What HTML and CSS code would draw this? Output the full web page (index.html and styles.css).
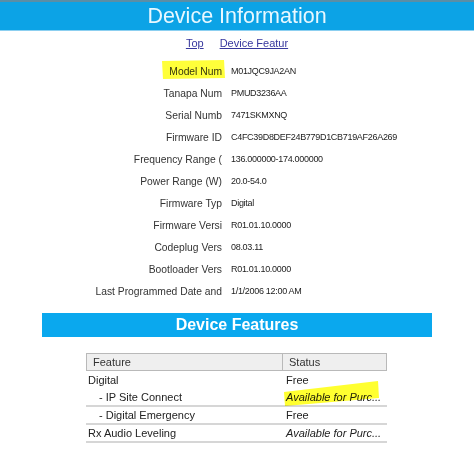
FILE: index.html
```html
<!DOCTYPE html>
<html>
<head>
<meta charset="utf-8">
<link rel="stylesheet" href="styles.css">
</head>
<body>
<div class="topline"></div>
<header class="banner">Device Information</header>
<nav class="nav"><a href="#">Top</a><a href="#">Device Featur</a></nav>

<div class="info">
  <svg class="marker marker-model" width="474" height="30" viewBox="0 0 474 30"><polygon points="162,1 224,0 225,18 163,19" fill="#ffff3a"/></svg>
  <div class="label">Model Num</div><div class="value">M01JQC9JA2AN</div>
  <div class="label">Tanapa Num</div><div class="value">PMUD3236AA</div>
  <div class="label">Serial Numb</div><div class="value">7471SKMXNQ</div>
  <div class="label">Firmware ID</div><div class="value">C4FC39D8DEF24B779D1CB719AF26A269</div>
  <div class="label">Frequency Range (</div><div class="value">136.000000-174.000000</div>
  <div class="label">Power Range (W)</div><div class="value">20.0-54.0</div>
  <div class="label">Firmware Typ</div><div class="value">Digital</div>
  <div class="label">Firmware Versi</div><div class="value">R01.01.10.0000</div>
  <div class="label">Codeplug Vers</div><div class="value">08.03.11</div>
  <div class="label">Bootloader Vers</div><div class="value">R01.01.10.0000</div>
  <div class="label">Last Programmed Date and</div><div class="value">1/1/2006 12:00 AM</div>
</div>

<div class="section-bar">Device Features</div>

<div class="features">
  <div class="frow head"><div class="fcell feat">Feature</div><div class="fcell stat">Status</div></div>
  <div class="frow group"><div class="fcell feat">Digital</div><div class="fcell stat">Free</div></div>
  <div class="frow"><div class="fcell feat sub">- IP Site Connect</div><div class="fcell stat it">Available for Purc...</div></div>
  <div class="frow"><div class="fcell feat sub">- Digital Emergency</div><div class="fcell stat">Free</div></div>
  <div class="frow"><div class="fcell feat">Rx Audio Leveling</div><div class="fcell stat it">Available for Purc...</div></div>
  <svg class="marker marker-status" width="301" height="120" viewBox="0 0 301 120"><polygon points="198,39 292,28 293,45 199,53" fill="#ffff30"/></svg>
</div>
</body>
</html>
```

FILE: styles.css
```css
html, body {
  margin: 0;
  padding: 0;
  background: #ffffff;
  font-family: "Liberation Sans", Arial, sans-serif;
  color: #333;
}

.topline {
  height: 2px;
  background: #5b8ea6;
}

.banner {
  height: 28px;
  line-height: 29px;
  background: #0ca3e6;
  border-bottom: 1px solid #8ccff0;
  color: #e8f8ff;
  text-align: center;
  font-size: 21.5px;
}

.nav {
  height: 24px;
  display: flex;
  justify-content: center;
  align-items: center;
  gap: 16px;
  font-size: 11px;
}
.nav a {
  color: #37379e;
  text-decoration: underline;
}

.info {
  position: relative;
  margin-top: 5px;
  display: grid;
  grid-template-columns: 222px 1fr;
  column-gap: 9px;
  grid-auto-rows: 22px;
  align-items: center;
}
.label {
  text-align: right;
  font-size: 10.3px;
  color: #333;
  white-space: nowrap;
}
.value {
  font-size: 9px;
  letter-spacing: -0.3px;
  color: #222;
  white-space: nowrap;
}

.marker {
  position: absolute;
  left: 0;
  top: 0;
  mix-blend-mode: multiply;
  pointer-events: none;
}

.section-bar {
  margin: 11px 42px 0;
  height: 24px;
  line-height: 24px;
  background: #0aa8ee;
  color: #ffffff;
  text-align: center;
  font-weight: bold;
  font-size: 16px;
}

.features {
  position: relative;
  margin: 16px 0 0 86px;
  width: 301px;
  font-size: 11px;
  color: #222;
}
.frow {
  display: flex;
  height: 18px;
  align-items: center;
  border-bottom: 2px solid #d6d6d6;
  box-sizing: border-box;
}
.frow.head {
  background: #efefef;
  border: 1px solid #b9b9b9;
  color: #333;
}
.frow.group {
  border-bottom: none;
}
.fcell {
  height: 100%;
  display: flex;
  align-items: center;
  white-space: nowrap;
}
.feat {
  width: 196px;
  padding-left: 2px;
  box-sizing: border-box;
}
.head .feat {
  padding-left: 6px;
  border-right: 1px solid #b9b9b9;
}
.stat {
  flex: 1;
  padding-left: 4px;
}
.head .stat {
  padding-left: 6px;
}
.sub {
  padding-left: 13px;
}
.it {
  font-style: italic;
}
```
